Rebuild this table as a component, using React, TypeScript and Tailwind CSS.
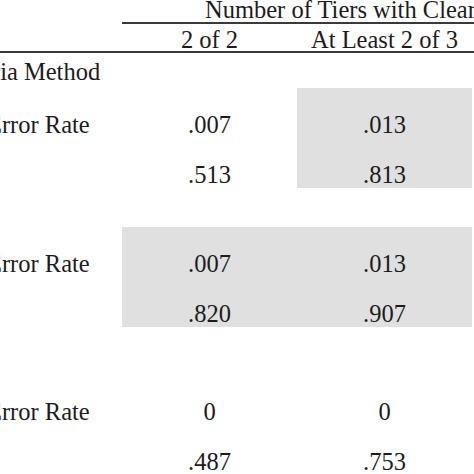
type Row = { label?: string; a: string; b: string };
type Group = { rows: Row[]; shade: "none" | "right" | "both" };

const groups: Group[] = [
  {
    shade: "right",
    rows: [
      { label: "Error Rate", a: ".007", b: ".013" },
      { a: ".513", b: ".813" },
    ],
  },
  {
    shade: "both",
    rows: [
      { label: "Error Rate", a: ".007", b: ".013" },
      { a: ".820", b: ".907" },
    ],
  },
  {
    shade: "none",
    rows: [
      { label: "Error Rate", a: "0", b: "0" },
      { a: ".487", b: ".753" },
    ],
  },
];

const gaps = ["mt-[4px]", "mt-[39px]", "mt-[48px]"];

function GroupBlock({ group, gap }: { group: Group; gap: string }) {
  const shadeA = group.shade === "both" ? "bg-[#e0e0e0]" : "";
  const shadeB = group.shade !== "none" ? "bg-[#e0e0e0]" : "";
  return (
    <div className={`${gap} grid grid-cols-[122px_175px_175px]`}>
      {group.rows.map((r, i) => (
        <div key={i} className="contents">
          <div className="h-[50px] pt-[25px] leading-[24px] whitespace-nowrap">
            {r.label && <span className="ml-[-13px] inline-block">{r.label}</span>}
          </div>
          <div className={`h-[50px] pt-[25px] leading-[24px] text-center ${shadeA}`}>{r.a}</div>
          <div className={`h-[50px] pt-[25px] leading-[24px] text-center ${shadeB}`}>{r.b}</div>
        </div>
      ))}
    </div>
  );
}

export default function App() {
  return (
    <div
      className="w-[474px] h-[474px] overflow-hidden bg-white text-[#1c1c1c] text-[24.5px]"
      style={{ fontFamily: "'Liberation Serif', 'Times New Roman', serif" }}
    >
      {/* spanning header */}
      <div className="ml-[122px] h-[24px] border-b-2 border-[#3a3a3a] overflow-hidden">
        <div className="pl-[83px] leading-[20px] whitespace-nowrap">Number of Tiers with Clear Evidence</div>
      </div>

      {/* column headers */}
      <div className="grid grid-cols-[122px_175px_177px] h-[29px] pt-[4px] border-b-2 border-[#3a3a3a] leading-[24px]">
        <div />
        <div className="text-center">2 of 2</div>
        <div className="text-center whitespace-nowrap pr-[2px]">At Least 2 of 3</div>
      </div>

      <div className="mt-[7px] leading-[24px] whitespace-nowrap">
        <span className="ml-[-57px] inline-block">Criteria Method</span>
      </div>

      {groups.map((g, i) => (
        <GroupBlock key={i} group={g} gap={gaps[i]} />
      ))}
    </div>
  );
}
